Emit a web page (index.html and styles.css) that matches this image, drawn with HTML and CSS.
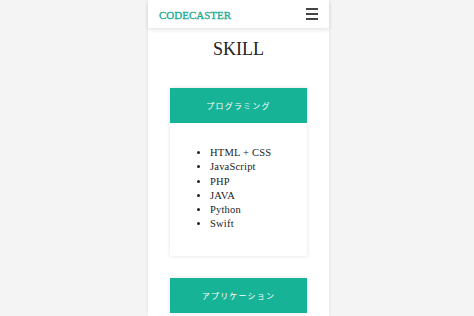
FILE: index.html
```
<!DOCTYPE html>
<html lang="ja">
<head>
<meta charset="utf-8">
<link rel="stylesheet" href="styles.css">
</head>
<body>
<div class="page">
  <header class="header">
    <span class="logo">CODECASTER</span>
    <span class="menu"><i></i><i></i><i></i></span>
  </header>
  <main class="main">
    <h1 class="title">SKILL</h1>
    <section class="card">
      <h2 class="card-head">プログラミング</h2>
      <div class="card-body">
        <ul class="list">
          <li>HTML + CSS</li>
          <li>JavaScript</li>
          <li>PHP</li>
          <li>JAVA</li>
          <li>Python</li>
          <li>Swift</li>
        </ul>
      </div>
    </section>
    <section class="card">
      <h2 class="card-head">アプリケーション</h2>
    </section>
  </main>
</div>
</body>
</html>
```
FILE: styles.css
```
html, body {
  margin: 0;
  padding: 0;
  background: #f4f4f4;
  height: 100%;
  overflow: hidden;
}
.page {
  width: 181px;
  margin-left: 148px;
  background: #fff;
  min-height: 316px;
  box-shadow: 0 0 4px rgba(0,0,0,0.08);
  font-family: "Liberation Serif", serif;
}
.header {
  height: 28px;
  display: flex;
  align-items: center;
  justify-content: space-between;
  padding: 0 11px;
  box-shadow: 0 2px 4px rgba(0,0,0,0.1);
  position: relative;
}
.logo {
  color: #1bab94;
  font-size: 11px;
  font-weight: normal;
  letter-spacing: 0;
  -webkit-text-stroke: 0.3px #1bab94;
  margin-top: 1px;
}
.menu {
  display: flex;
  flex-direction: column;
  gap: 3px;
  width: 12px;
}
.menu i {
  display: block;
  height: 2px;
  background: #444;
}
.main {
  padding: 0 22px;
}
.title {
  margin: 0;
  padding-top: 11px;
  height: 60px;
  text-align: center;
  font-weight: normal;
  font-size: 18px;
  color: #222;
  box-sizing: border-box;
}
.card {
  margin: 0 0 22px 0;
  box-shadow: 0 0 4px rgba(0,0,0,0.12);
}
.card-head {
  margin: 0;
  height: 35px;
  background: #17b397;
  color: #fff;
  font-family: "Noto Sans CJK JP", sans-serif;
  font-weight: normal;
  font-size: 8px;
  letter-spacing: 1.2px;
  display: flex;
  align-items: center;
  justify-content: center;
}
.card-body {
  padding: 23px 0 24px 0;
}
.list {
  margin: 0;
  padding-left: 40px;
  font-size: 10.5px;
  line-height: 14.3px;
  color: #222;
  letter-spacing: 0.2px;
}
```
